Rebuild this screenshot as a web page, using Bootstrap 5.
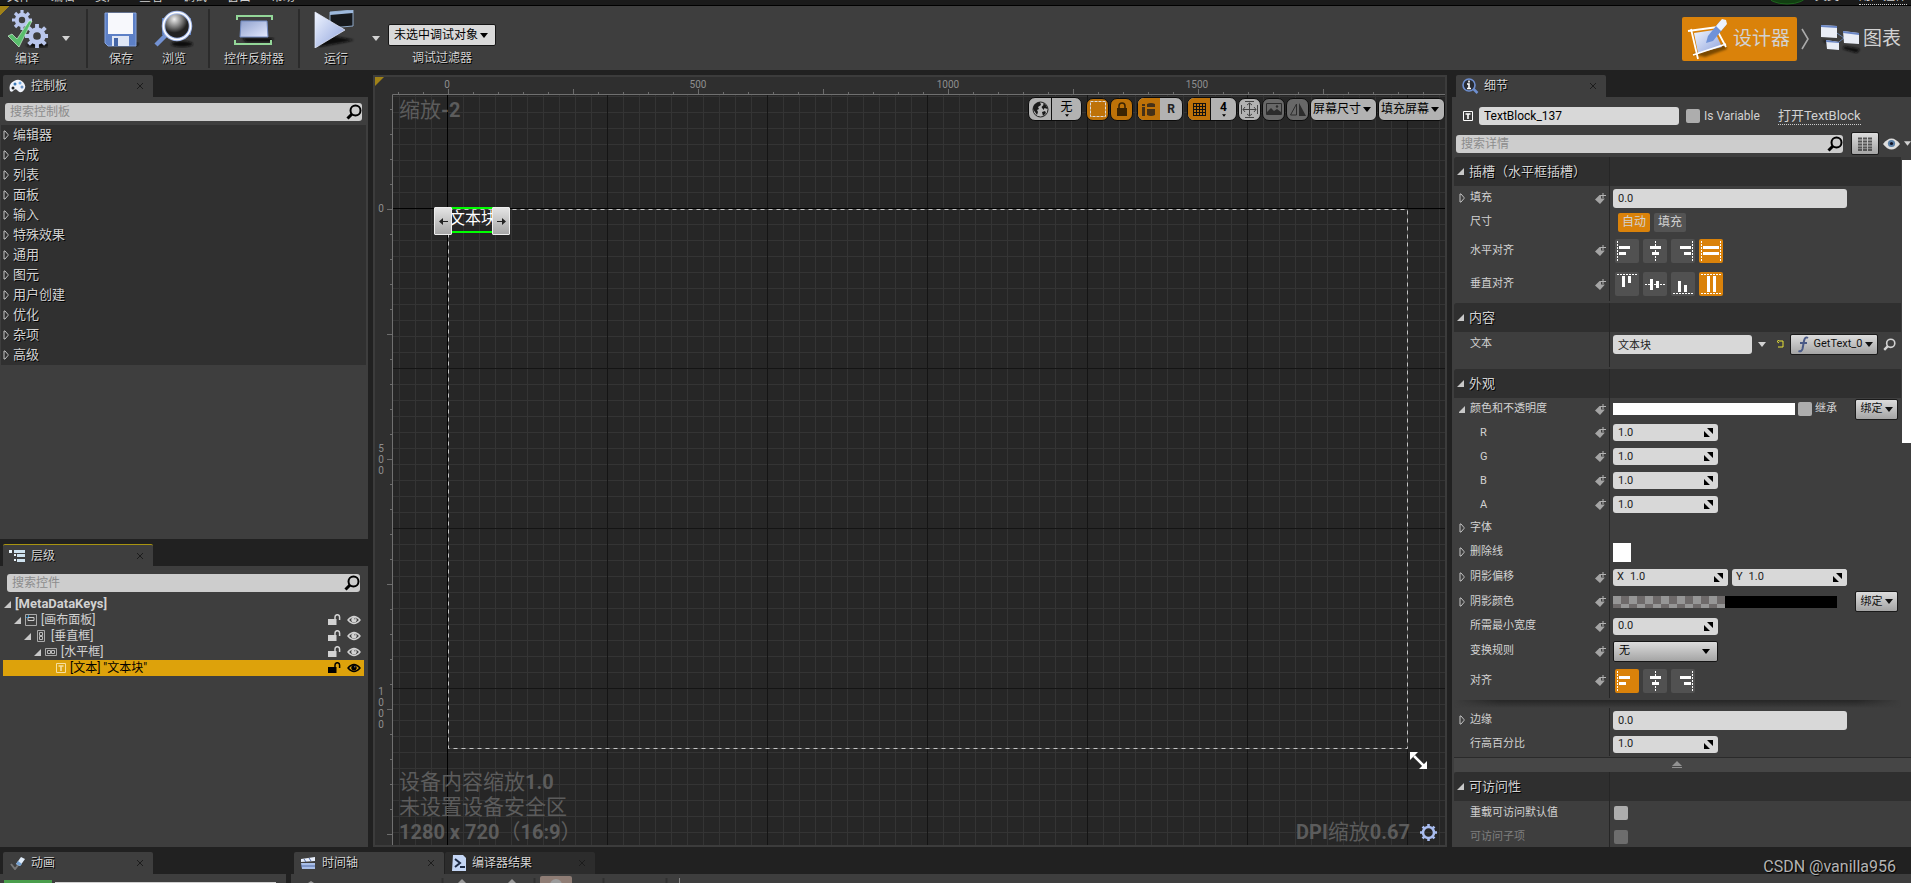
<!DOCTYPE html>
<html lang="zh-CN">
<head>
<meta charset="utf-8">
<meta name="viewport" content="width=device-width, initial-scale=1">
<title>控件蓝图编辑器</title>
<link href="https://cdn.jsdelivr.net/npm/bootstrap@5.3.0/dist/css/bootstrap.min.css" rel="stylesheet">
<script src="https://cdn.jsdelivr.net/npm/bootstrap@5.3.0/dist/js/bootstrap.bundle.min.js"></script>
<style>
:root{--chrome:#212121;--panel:#3e3e3e;--list:#303030;--field:#d8d8d8;--hot:#da820a;--ink:#d2d2d2}
body{font-family:Roboto,"Noto Sans CJK SC",sans-serif;font-size:12px;line-height:16px;color:var(--ink);background:var(--chrome)}
button,input,select{font-family:inherit;color:inherit}
input,select{min-width:0}
svg{display:block;flex:none}
a{color:inherit;text-decoration:none}
.sh{text-shadow:1px 1px 0 #000}
.menu-strip{height:6px;background:#1a1a1a;border-bottom:1px solid #000}
.menu-strip nav{gap:20px;padding-left:7px}
.dotted{border-bottom:1px dotted #ccc}
.tool-strip{height:64px;background:var(--panel);gap:14px;padding:0 10px 0 6px}
.tool-strip .vr{width:2px;height:59px;background:#2b2b2b;opacity:1;margin-top:3px}
.tool-btn{background:none;border:0;padding:4px 0 0;display:flex;flex-direction:column;align-items:center;color:var(--ink)}
.tool-btn span{line-height:20px;margin-top:1px}
.corner{width:9px;height:9px;top:0;left:0;background:linear-gradient(135deg,#a08218 50%,transparent 50%)}
.caret-btn{background:none;border:0;padding:0;width:10px}
.debug-pick{margin-left:-8px;padding-top:18px}
.debug-pick .combo{width:108px;height:22px}
.combo{appearance:none;border:1px solid #151515;border-radius:2px;color:#000;padding:0 0 0 5px;
 background:#d9d9d9 url("data:image/svg+xml,%3Csvg xmlns='http://www.w3.org/2000/svg' width='8' height='5'%3E%3Cpath d='M0 0h8L4 5z'/%3E%3C/svg%3E") no-repeat right 7px center}
.combo-grad{width:105px;height:21px;background-image:url("data:image/svg+xml,%3Csvg xmlns='http://www.w3.org/2000/svg' width='8' height='5'%3E%3Cpath d='M0 0h8L4 5z'/%3E%3C/svg%3E"),linear-gradient(#dcdcdc,#a4a4a4);background-position:right 7px center,0 0;background-repeat:no-repeat}
.modes{height:66px}
.mode-btn{height:44px;border:0;border-radius:2px;background:none;font-size:19px;line-height:24px;padding:0;display:flex;align-items:center}
.mode-btn.active{background:var(--hot);padding:0 7px 0 5px}
.side-left{width:368px}
.side-right{width:459px}
.dock-tab{width:150px;height:22px;margin-left:3px;background:var(--panel);border-radius:2px 2px 0 0;padding:0 9px 0 6px}
.dock-tab.focused{border-top:1px solid #a89410}
.dock-tab.idle{background:#2c2c2c;margin-left:1px}
.dock-tab .x{background:none;border:0;padding:0;color:#222}
.dock-tab .sh{margin-left:5px}
.dock-body{background:var(--panel)}
.search{height:18px;background:#cdcdcd;border-radius:3px;color:#000}
.search input{background:none;border:0;outline:0;flex:1;padding:0 5px;height:18px}
.search input::placeholder{color:#8c8c8c;opacity:1}
.in-palette{margin:6px 6px 0 5px}
.in-tree{margin:8px 8px 4px 7px}
.palette-list{background:var(--list);margin:4px 2px 0 1px}
.palette-list a{height:20px;font-size:13px;padding-left:2px;gap:4px}
.tree-row{height:16px;padding-right:3px;margin:0 4px 0 3px;gap:4px}
.tree-row.picked{background:#dda20b;color:#000}
.tree-row .lock{margin-left:auto;margin-right:2px}
.lv0{padding-left:1px;font-size:13px}.lv1{padding-left:11px}.lv2{padding-left:21px}.lv3{padding-left:31px}.lv4{padding-left:53px}
.stage{border:2px solid #3c3c3c;background:#262626;min-height:0}
.stage-text{font-size:21px;line-height:25px;color:#5c5c5c;left:24px}
.stage-text b{font-size:20px}
.stage-zoom{top:21px}
.stage-dpi{left:auto;right:8px;gap:10px}
.view-tools{top:20px;right:0;gap:1px}
.pill{height:24px;border:1px solid #0c0c0c;border-radius:7px;background:#b2b2b2;color:#222;padding:0;overflow:hidden;display:flex;align-items:center;justify-content:center}
.pill.small-pill{height:23px;width:23px}
.pill.on,.pill .on{background:#be7208}
.pill.off{background:#686868}
.pill.last{margin-right:3px}
.pill button{border:0;padding:0;background:none;height:22px;width:22px;display:flex;flex-direction:column;align-items:center;justify-content:center;line-height:13px}
.pill .drop{width:30px;border-left:1px solid #111;color:#000}
.pill .drop.narrow{width:26px}
.pill-combo{border-radius:6px;height:23px;width:67px;background-color:#b2b2b2;border-color:#0c0c0c;background-position:right 5px center;padding-left:2px}
.shift{width:18px;height:28px;border:1px solid #eee;border-radius:1px;background:linear-gradient(#e4e4e4,#a6a6a6);padding:0;display:flex;align-items:center;justify-content:center}
.widget-sel{left:59px;top:130px;width:76px;height:28px}
.widget-text{border-top:2px solid #0f0;border-bottom:2px solid #0f0;height:26px;width:52px;margin-left:-5px;margin-right:-7px;font-size:16px;line-height:20px;color:#fff;padding-left:2px;white-space:nowrap;overflow:hidden}
.field{background:var(--field);border:0;border-radius:3px;color:#222;font-size:11px;height:19px;padding:0 5px;line-height:18px}
.field.num{height:17px;width:105px;background-image:url("data:image/svg+xml,%3Csvg xmlns='http://www.w3.org/2000/svg' width='9' height='9'%3E%3Cpath d='M3 0h6v6zM0 3v6h6z'/%3E%3C/svg%3E");background-repeat:no-repeat;background-position:right 5px center}
.field.wide{width:234px}
.field.mid{width:139px}
.field.title{width:200px;height:18px;margin:0 7px 0 6px;font-size:12px;color:#000}
.name-bar{padding:10px 0 0 11px;height:28px}
.name-bar a{margin-left:18px;font-size:13px;line-height:17px}
.find-bar{padding:6px 0 0 4px;height:32px}
.find-bar .grad-btn{width:28px;height:23px}
.axis{background:var(--field);border-radius:3px;height:17px;width:115px;color:#222;font-size:11px}
.axis .num{flex:1;width:auto;padding-left:6px}
.tick{appearance:none;width:14px;height:14px;border-radius:2px;background:#adadad;margin:0;display:block}
.tick:disabled{background:#6d6d6d}
.tick.mid-row{margin:0 3px}
.grad-btn{border:1px solid #1a1a1a;border-radius:2px;background:linear-gradient(#dcdcdc,#a4a4a4);color:#111;font-size:11px;padding:0;height:21px;display:flex;align-items:center;justify-content:center;gap:2px}
.grad-btn.bind{width:43px;margin:0 3px 0 auto}
.grad-btn.func{width:88px;margin:0 5px 0 6px}
.more{margin:0 10px 0 6px}
.props{margin-right:10px}
.sect{height:29px;background:#2f2f2f;border-radius:3px 0 0 0;font-size:13px;margin-left:2px}
.sect.later{margin-top:2px}
.sect h2{font-size:13px;line-height:29px;font-weight:400;margin:0;padding-left:3px;gap:5px}
.name-col{width:156px;border-right:1px solid #262626;align-self:stretch}
.prop{font-size:11px;margin-left:2px}
.prop .name-col{padding:0 3px 0 16px}
.prop .name-col.open{padding-left:5px}
.prop .name-col.open svg:first-child{margin-right:5px}
.prop .val{padding-left:3px;flex:1}
.prop .chan{padding-left:10px}
.prop .opts{padding-left:5px}
.h23{height:23px}.h24{height:24px}.h25{height:25px}.h33{height:33px}.h34{height:34px}.h35{height:35px}
.text-opt{width:32px;height:19px;border:0;border-radius:2px;background:#535353;padding:0;font-size:12px;line-height:18px}
.ico-opt{width:24px;height:24px;border:0;border-radius:2px;background:#515151;padding:0;color:#fff}
.text-opt.active,.ico-opt.active{background:var(--hot)}
.shadow-line{height:8px;margin:2px 0 0 2px;background:linear-gradient(#262626,transparent);-webkit-mask:linear-gradient(90deg,transparent,#000 10%,#000 90%,transparent)}
.fold{height:14px;margin:2px 0 0 2px;padding:0 14px 0 0;background:#464646;box-shadow:0 -1px 0 #2a2a2a}
.checker{width:112px;height:12px;background:repeating-conic-gradient(#6e6a6a 0 25%,#969696 0 50%) 0 0/16px 16px}
.swatch{border:0;padding:0;background:#fff;height:12px}
.swatch.tint{width:182px}.swatch.shade{width:224px}.swatch.brush{width:18px;height:19px}
.dim{color:#7e7e7e}
.props-scroll{top:63px;right:0;width:9px;height:283px;background:#fff}
.bottom-strip{height:31px;gap:5px}
.anim{width:286px}
.mark-text{right:15px;bottom:5px;font-size:16px;line-height:22px;color:#b4b4b4;text-shadow:1px 1px 1px #000}
.add-bar{width:48px;height:3px;background:#4a9e4c}
.find-edge{width:221px;height:1px;background:#d0d0d0;margin-left:3px}
</style>
</head>
<body class="vh-100 overflow-hidden d-flex flex-column">

<svg width="0" height="0" class="position-absolute" aria-hidden="true">
 <defs>
  <symbol id="mag" viewBox="0 0 16 16"><circle cx="9.500" cy="6.500" r="5" fill="none" stroke="currentColor" stroke-width="2"/><path d="M6 10 1.500 14.500" stroke="currentColor" stroke-width="3"/></symbol>
  <symbol id="closed" viewBox="0 0 6 10"><path d="M1 1v8h1l3-3.500v-1L2 1z" fill="none" stroke="#c4c4c4"/></symbol>
  <symbol id="opened" viewBox="0 0 8 8"><path d="M8 0v8H0z" fill="#c8c8c8"/></symbol>
  <symbol id="down" viewBox="0 0 8 5"><path d="M0 0h8L4 5z" fill="currentColor"/></symbol>
  <symbol id="cross" viewBox="0 0 8 8"><path d="m1 1 6 6M7 1 1 7" stroke="#1c1c1c"/></symbol>
  <symbol id="lock-open" viewBox="0 0 13 12"><path d="M0 5h8.500v6H0z" fill="currentColor"/><path d="M7 5V3a2.300 2.300 0 0 1 4.600 0v3" fill="none" stroke="currentColor" stroke-width="1.500"/></symbol>
  <symbol id="eye" viewBox="0 0 14 10"><path d="M1 5q6-7 12 0-6 7-12 0z" fill="none" stroke="currentColor" stroke-width="1.400"/><circle cx="7" cy="4.800" r="2.700" fill="currentColor"/><circle cx="7.800" cy="3.800" r=".8" fill="#777"/></symbol>
  <symbol id="key" viewBox="0 0 11 11"><path d="M0 6.500 4.500 2H6v3.500h3.500V6L5 11z" fill="#a4a4a4"/><path d="M8 0v5M5.500 2.500h5.500" stroke="#b4b4b4"/></symbol>
  <symbol id="tbox" viewBox="0 0 10 10"><path d="M.5.5h9v9h-9z" fill="none" stroke="currentColor"/><path d="M2.500 3h5M5 3v5" stroke="currentColor" stroke-width="1.600"/></symbol>
  <symbol id="h-l" viewBox="0 0 24 24"><path d="M2.500 2v20" stroke="#fff" stroke-dasharray="2 1"/><path d="M4 7h11v3H4zM4 13h7v3H4z" fill="#fff"/></symbol>
  <symbol id="h-c" viewBox="0 0 24 24"><path d="M12.500 2v20" stroke="#fff" stroke-dasharray="2 1"/><path d="M7 7h11v3H7zM9 13h7v3H9z" fill="#fff"/></symbol>
  <symbol id="h-r" viewBox="0 0 24 24"><path d="M21.500 2v20" stroke="#fff" stroke-dasharray="2 1"/><path d="M9 7h11v3H9zM13 13h7v3h-7z" fill="#fff"/></symbol>
  <symbol id="h-f" viewBox="0 0 24 24"><path d="M2.500 2v20M21.500 2v20" stroke="#fff" stroke-dasharray="2 1"/><path d="M4 7h16v3H4zM4 13h16v3H4z" fill="#fff"/></symbol>
  <symbol id="v-t" viewBox="0 0 24 24"><path d="M2 2.500h20" stroke="#fff" stroke-dasharray="2 1"/><path d="M7 4h3v11H7zM13 4h3v7h-3z" fill="#fff"/></symbol>
  <symbol id="v-c" viewBox="0 0 24 24"><path d="M2 12.500h20" stroke="#fff" stroke-dasharray="2 1"/><path d="M7 7h3v11H7zM13 9h3v7h-3z" fill="#fff"/></symbol>
  <symbol id="v-b" viewBox="0 0 24 24"><path d="M2 21.500h20" stroke="#fff" stroke-dasharray="2 1"/><path d="M7 9h3v11H7zM13 13h3v7h-3z" fill="#fff"/></symbol>
  <symbol id="v-f" viewBox="0 0 24 24"><path d="M2 2.500h20M2 21.500h20" stroke="#fff" stroke-dasharray="2 1"/><path d="M8 4h3v16H8zM14 4h3v16h-3z" fill="#fff"/></symbol>
  <symbol id="gear" viewBox="-10 -10 20 20"><circle r="5.200" fill="none" stroke="currentColor" stroke-width="4"/><path d="M0-10V-6M0 6v4M-10 0h4M6 0h4M-7-7l3 3M4 4l3 3M7-7 4-4M-4 4l-3 3" stroke="currentColor" stroke-width="3.200"/></symbol>
  <linearGradient id="blue" x2="1" y2="1"><stop stop-color="#f0f5ff"/><stop offset="1" stop-color="#8ea2dc"/></linearGradient>
  <linearGradient id="pale" x2="1" y2="1"><stop stop-color="#8fa0cc"/><stop offset="1" stop-color="#e4eaff"/></linearGradient>
  <radialGradient id="glass" cx=".4" cy=".25"><stop stop-color="#eee"/><stop offset=".6" stop-color="#777"/><stop offset="1" stop-color="#222"/></radialGradient>
  <filter id="soft"><feGaussianBlur stdDeviation="1"/></filter>
 </defs>
</svg>

<header class="flex-shrink-0">
 <div class="menu-strip d-flex align-items-end justify-content-between overflow-hidden">
  <nav class="d-flex" aria-label="菜单">
   <a href="#">文件</a><a href="#">编辑</a><a href="#">资产</a><a href="#">查看</a><a href="#">调试</a><a href="#">窗口</a><a href="#">帮助</a>
  </nav>
  <div class="d-flex"><svg width="40" height="7" class="me-1 align-self-end"><ellipse cx="16" cy="-3" rx="20" ry="9" fill="#123f12" stroke="#1d641d"/></svg><span class="me-2">父类：</span><a href="#" class="dotted me-1">用户控件</a></div>
 </div>
 <div class="tool-strip d-flex align-items-start position-relative">
  <div class="corner position-absolute"></div>
  <button class="tool-btn"><svg width="42" height="38" viewBox="0 0 42 38">
    <ellipse cx="32" cy="35" rx="12" ry="2.500" fill="#111" filter="url(#soft)"/>
    <g color="#b9c6ec"><use href="#gear" x="6" y="0" width="20" height="20"/><use href="#gear" x="19" y="14" width="24" height="24"/></g>
    <path d="m2 26 4-2 5 5L23 11l3 0L13 37z" fill="#59bd6c" stroke="#e1ffe6" stroke-width=".6"/></svg><span class="sh">编译</span></button>
  <button class="caret-btn align-self-center" aria-label="编译选项"><svg width="8" height="5"><use href="#down"/></svg></button>
  <div class="vr"></div>
  <button class="tool-btn"><svg width="38" height="38" viewBox="0 0 38 38">
    <path d="M6 33h31l-2 3H10z" fill="#111" filter="url(#soft)"/><path d="M3 3h31v33H6l-3-3z" fill="#5d80c6" stroke="#86a3dd"/><path d="M6 3h25v21H6z" fill="#f7f8fc"/><path d="M10 26h17v10H10z" fill="#dfe6f5"/><path d="M12 28h4v8h-4z" fill="#4465a6"/></svg><span class="sh">保存</span></button>
  <button class="tool-btn"><svg width="40" height="38" viewBox="0 0 40 38">
    <ellipse cx="28" cy="34" rx="11" ry="3" fill="#111" filter="url(#soft)"/><path d="M8 8h29v17H8z" fill="#5878b5"/><path d="M12 25 2 35" stroke="#7392d2" stroke-width="4.500"/><circle cx="23" cy="16" r="13.500" fill="url(#glass)" stroke="#a3b8e8" stroke-width="3.500"/><circle cx="23" cy="16" r="13.500" fill="none" stroke="#fff" stroke-width="1.500"/></svg><span class="sh">浏览</span></button>
  <div class="vr"></div>
  <button class="tool-btn"><svg width="60" height="38" viewBox="0 0 60 38">
    <path d="M18 28h32l-3 4H22z" fill="#0a0a0a" filter="url(#soft)"/><path d="M17 11h26l1 16H16z" fill="url(#pale)" stroke="#738bc2"/><path d="M13 10V6h35v4M11 30v4h36v-4" fill="none" stroke="#93d698" stroke-width="2"/></svg><span class="sh">控件反射器</span></button>
  <div class="vr"></div>
  <button class="tool-btn"><svg width="44" height="38" viewBox="2 1 44 38">
    <path d="M16 26 42 31l-8 2-28 5z" fill="#0c0c0c" filter="url(#soft)"/><path d="m18 3 23-2v16l-23 2z" fill="#16191d" stroke="#8fa9c8"/><path d="m18 3 23-2v3L18 6z" fill="#9db9dd"/><path d="M3 3 33 21 3 39z" fill="url(#blue)" stroke="#e8eeff" stroke-width=".7"/></svg><span class="sh">运行</span></button>
  <button class="caret-btn align-self-center" aria-label="运行选项"><svg width="8" height="5"><use href="#down"/></svg></button>
  <div class="debug-pick text-center">
   <select id="dbg" class="combo d-block"><option>未选中调试对象</option></select>
   <label for="dbg" class="sh d-block mt-1">调试过滤器</label>
  </div>
  <div class="modes ms-auto d-flex align-items-center">
   <button class="mode-btn active gap-1"><svg width="42" height="42" viewBox="0 0 42 42">
     <path d="M5 36 38 26l2 5-22 8z" fill="#7a4a05" filter="url(#soft)"/><path d="m7 15 20-3 8 17-24 6z" fill="url(#blue)"/><path d="m1 13 30-4M4 11l7 30M6 37l33-11M30 12l9 17" stroke="#fff" stroke-width="1.800" fill="none"/><path d="M19 25l2-7L33 3l6 4-13 16z" fill="#6f92d8"/><path d="m29 8 6-7 4 1 1 4-6 7z" fill="#edf3ff"/></svg>设计器</button>
   <svg width="10" height="24" viewBox="0 0 10 24" class="mx-1"><path d="m1 2 6 10-6 10" fill="none" stroke="#aaa" stroke-width="1.600"/></svg>
   <button class="mode-btn ms-1"><svg width="44" height="30" viewBox="1 0 44 30">
     <path d="M26 22l16 3-3 4-14-4zM4 16l12 3v6z" fill="#111" filter="url(#soft)"/><path d="M16 7 26 14 17 21" stroke="#5f7cab" fill="none"/><path d="m3 1 16 1v12l-16-1zM25 7l16 2v11l-15-1zM8 16l13 2v8L9 25z" fill="#e9edf6"/><path d="m3 1 16 1v2L3 3zM25 7l16 2v2L25 9zM8 16l13 2v1L8 18z" fill="#6a86c5"/></svg>图表</button>
  </div>
 </div>
</header>

<main class="d-flex flex-fill overflow-hidden" style="gap:5px;padding:5px 0">
 <!-- left column: palette and hierarchy -->
 <div class="side-left d-flex flex-column flex-shrink-0" style="gap:5px">
  <section class="d-flex flex-column" style="flex:464 1 0">
   <div class="dock-tab d-flex align-items-center"><svg width="17" height="14" viewBox="0 0 17 14"><path d="M1 12Q-1 5 5 2q5-3 9 1 4 4 1 8-3 4-6 1-2-3-4-1-2 3-4 1z" fill="#f0f3fa"/><circle cx="6" cy="5" r="1.500" fill="#3b78b8"/><circle cx="11" cy="4" r="1.500" fill="#77aee6"/><circle cx="4" cy="9" r="1.500" fill="#222"/><circle cx="13" cy="8" r="1.500" fill="#6893c8"/></svg><span class="sh">控制板</span><button class="x ms-auto" aria-label="关闭"><svg width="8" height="8"><use href="#cross"/></svg></button></div>
   <div class="dock-body flex-fill d-flex flex-column">
    <div class="search in-palette d-flex align-items-center"><input type="search" placeholder="搜索控制板" aria-label="搜索控制板"><svg width="16" height="16"><use href="#mag"/></svg></div>
    <div class="palette-list sh">
     <a href="#" class="d-flex align-items-center"><svg width="6" height="10"><use href="#closed"/></svg>编辑器</a>
     <a href="#" class="d-flex align-items-center"><svg width="6" height="10"><use href="#closed"/></svg>合成</a>
     <a href="#" class="d-flex align-items-center"><svg width="6" height="10"><use href="#closed"/></svg>列表</a>
     <a href="#" class="d-flex align-items-center"><svg width="6" height="10"><use href="#closed"/></svg>面板</a>
     <a href="#" class="d-flex align-items-center"><svg width="6" height="10"><use href="#closed"/></svg>输入</a>
     <a href="#" class="d-flex align-items-center"><svg width="6" height="10"><use href="#closed"/></svg>特殊效果</a>
     <a href="#" class="d-flex align-items-center"><svg width="6" height="10"><use href="#closed"/></svg>通用</a>
     <a href="#" class="d-flex align-items-center"><svg width="6" height="10"><use href="#closed"/></svg>图元</a>
     <a href="#" class="d-flex align-items-center"><svg width="6" height="10"><use href="#closed"/></svg>用户创建</a>
     <a href="#" class="d-flex align-items-center"><svg width="6" height="10"><use href="#closed"/></svg>优化</a>
     <a href="#" class="d-flex align-items-center"><svg width="6" height="10"><use href="#closed"/></svg>杂项</a>
     <a href="#" class="d-flex align-items-center"><svg width="6" height="10"><use href="#closed"/></svg>高级</a>
    </div>
   </div>
  </section>
  <section class="d-flex flex-column" style="flex:303 1 0">
   <div class="dock-tab focused d-flex align-items-center"><svg width="17" height="14" viewBox="0 0 17 14"><path d="M0 1h3v3H0zM5 5h2v2H5zM5 10h2v2H5z" fill="#e9f2f8"/><path d="M5 1h11v3H5zM8 5h8v3H8zM8 10h8v3H8z" fill="#cfe2ee"/></svg><span class="sh">层级</span><button class="x ms-auto" aria-label="关闭"><svg width="8" height="8"><use href="#cross"/></svg></button></div>
   <div class="dock-body flex-fill d-flex flex-column">
    <div class="search in-tree d-flex align-items-center"><input type="search" placeholder="搜索控件" aria-label="搜索控件"><svg width="16" height="16"><use href="#mag"/></svg></div>
    <div class="tree-row lv0 d-flex align-items-center"><svg width="7" height="7"><use href="#opened"/></svg><b>[MetaDataKeys]</b></div>
    <div class="tree-row lv1 d-flex align-items-center"><svg width="7" height="7"><use href="#opened"/></svg><svg width="12" height="12"><path d="M.5.5h11v11H.5z" fill="none" stroke="#aaa"/><path d="M3 3.500h6v3H3z" fill="none" stroke="#ccc"/><path d="M1 3.500h2M3.500 1v2" stroke="#2d8ccc"/></svg><span>[画布面板]</span><svg class="lock" width="13" height="12"><use href="#lock-open"/></svg><svg width="14" height="10"><use href="#eye"/></svg></div>
    <div class="tree-row lv2 d-flex align-items-center"><svg width="7" height="7"><use href="#opened"/></svg><svg width="12" height="12"><path d="M2.500.5h7v11h-7z" fill="none" stroke="#aaa"/><path d="M4.500 2.500h3v3h-3zM4.500 6.500h3v3h-3z" fill="none" stroke="#bbb"/></svg><span>[垂直框]</span><svg class="lock" width="13" height="12"><use href="#lock-open"/></svg><svg width="14" height="10"><use href="#eye"/></svg></div>
    <div class="tree-row lv3 d-flex align-items-center"><svg width="7" height="7"><use href="#opened"/></svg><svg width="12" height="12"><path d="M.5 2.500h11v7H.5z" fill="none" stroke="#aaa"/><path d="M2.500 4.500h3v3h-3zM6.500 4.500h3v3h-3z" fill="none" stroke="#bbb"/></svg><span>[水平框]</span><svg class="lock" width="13" height="12"><use href="#lock-open"/></svg><svg width="14" height="10"><use href="#eye"/></svg></div>
    <div class="tree-row lv4 picked d-flex align-items-center"><svg width="10" height="10" color="#f6dfa0"><use href="#tbox"/></svg><span>[文本] "文本块"</span><svg class="lock" width="13" height="12"><use href="#lock-open"/></svg><svg width="14" height="10"><use href="#eye"/></svg></div>
   </div>
  </section>
 </div>

 <!-- designer viewport: rulers and canvas -->
 <section class="stage position-relative flex-fill overflow-hidden">
  <svg width="100%" height="100%" class="position-absolute top-0 start-0" font-size="10" fill="#8e8e8e" text-anchor="middle">
   <defs>
    <pattern id="minor" x="24" y="19" width="16" height="16" patternUnits="userSpaceOnUse"><path d="M.5 0v16M0 .5h16" stroke="#343434"/></pattern>
    <pattern id="major" x="72" y="131" width="160" height="160" patternUnits="userSpaceOnUse"><path d="M.5 0v160M0 .5h160" stroke="#141414"/></pattern>
    <pattern id="rx" x="73" y="0" width="125" height="20" patternUnits="userSpaceOnUse"><path d="M.5 12v6M25.500 15v3M50.500 15v3M75.500 15v3M100.500 15v3" stroke="#6c6c6c"/></pattern>
    <pattern id="ry" x="0" y="132" width="20" height="125" patternUnits="userSpaceOnUse"><path d="M12 .5h6M15 25.500h3M15 50.500h3M15 75.500h3M15 100.500h3" stroke="#6c6c6c"/></pattern>
   </defs>
   <rect x="18" y="18" width="100%" height="100%" fill="url(#minor)"/>
   <rect x="18" y="18" width="100%" height="100%" fill="url(#major)"/>
   <path d="M72.500 18v900M18 131.500h2500" stroke="#000"/>
   <path d="M0 0h4000v17H17v2000H0z" fill="#2f2f2f"/>
   <rect x="18" width="100%" height="18" fill="url(#rx)"/><rect y="18" width="18" height="100%" fill="url(#ry)"/>
   <path d="M4000 17.500H17.500V2000" fill="none" stroke="#707070"/>
   <text x="72" y="11">0</text><text x="323" y="11">500</text><text x="573" y="11">1000</text><text x="822" y="11">1500</text>
   <text x="6" y="135">0</text>
   <text x="6" y="375">5</text><text x="6" y="386">0</text><text x="6" y="397">0</text>
   <text x="6" y="618">1</text><text x="6" y="629">0</text><text x="6" y="640">0</text><text x="6" y="651">0</text>
   <path d="M0 0h9L0 9z" fill="#a08218"/>
   <rect x="73.500" y="132.500" width="959" height="539" fill="none" stroke="#3f3f3f"/>
   <rect x="73.500" y="132.500" width="959" height="539" fill="none" stroke="#c4c4c4" stroke-dasharray="4 4"/>
   <g stroke="#fff" stroke-width="2.500" fill="#fff"><path d="m1039 679 10 10"/><path stroke="none" d="M1035 675h8l-8 8zM1052 692h-8l8-8z"/></g>
  </svg>
  <div class="stage-text stage-zoom position-absolute">缩放<b>-2</b></div>
  <div class="stage-text position-absolute bottom-0">设备内容缩放<b>1.0</b><br>未设置设备安全区<br><b>1280 x 720</b>（<b>16:9</b>）</div>
  <div class="stage-text stage-dpi position-absolute bottom-0 d-flex align-items-center"><span><b>DPI</b>缩放<b>0.67</b></span><button class="border-0 bg-transparent p-0" aria-label="设置"><svg width="17" height="17" color="#a9bdf0" viewBox="-10 -10 20 20"><circle r="6.500" fill="none" stroke="currentColor" stroke-width="3"/><path d="M0-10V-7M0 7v3M-10 0h3M7 0h3M-7-7l2 2M5 5l2 2M7-7 5-5M-5 5l-2 2" stroke="currentColor" stroke-width="3"/></svg></button></div>
  <div class="widget-sel position-absolute d-flex">
   <button class="shift position-relative z-1" aria-label="左移"><svg width="9" height="7"><path d="M4 0v3h5v1H4v3L0 3.500z" fill="#222"/></svg></button>
   <div class="widget-text">文本块</div>
   <button class="shift position-relative z-1" aria-label="右移"><svg width="9" height="7"><path d="M5 0v3H0v1h5v3l4-3.500z" fill="#222"/></svg></button>
  </div>
  <div class="view-tools position-absolute d-flex align-items-center">
   <div class="pill last"><button aria-label="本地化"><svg width="17" height="17" viewBox="0 0 17 17"><circle cx="8.500" cy="8.500" r="7.500" fill="#b9b9b9" stroke="#222"/><path d="M2 4q3-3 6-3l1 3-3 2 1 2-2 1 1 2-1 3-2-3-2-3zM11 2q4 2 4.500 6l-3-1-1 2-2-3 2-2zM10 11l3-1 1 2-3 3z" fill="#1a1a1a"/></svg></button><button class="drop"><span>无</span><svg width="4" height="3"><use href="#down"/></svg></button></div>
   <button class="pill small-pill on" aria-label="虚线轮廓"><svg width="16" height="16"><path d="M.5.5h15v15H.5z" fill="none" stroke="#ddd" stroke-dasharray="3 1"/></svg></button>
   <button class="pill small-pill on last" aria-label="遵守锁定"><svg width="12" height="14"><path d="M1 6h10v8H1z" fill="#3b2403"/><path d="M3 7V4a3 3 0 0 1 6 0v3" fill="none" stroke="#3b2403" stroke-width="1.600"/></svg></button>
   <div class="pill last"><button class="on" aria-label="布局变换"><svg width="14" height="13"><path d="M0 1h3v2H0zM0 4h3v9H0zM5 1q4-2 8 0v3H5zM5 6h8v6q-4 2-8 0z" fill="#453118"/></svg></button><button><b>R</b></button></div>
   <div class="pill"><button class="on" aria-label="网格吸附"><svg width="13" height="13"><path d="M.5 0v13M3.500 0v13M6.500 0v13M9.500 0v13M12.500 0v13M0 .5h13M0 3.500h13M0 6.500h13M0 9.500h13M0 12.500h13" stroke="#111"/></svg></button><button class="drop narrow"><b>4</b><svg width="4" height="3"><use href="#down"/></svg></button></div>
   <button class="pill small-pill" aria-label="缩放至合适大小"><svg width="17" height="17"><path d="M4 .5h9M4 16.500h9M.5 4v9M16.500 4v9M2 8.500h13M8.500 2v13M4 6 2 8.500 4 11M13 6l2 2.500-2 2.500M6 4l2.500-2L11 4M6 13l2.500 2 2.500-2" fill="none" stroke="#444"/></svg></button>
   <button class="pill small-pill off" aria-label="背景图"><svg width="16" height="12"><path d="M.5.5h15v11H.5z" fill="none" stroke="#2c2c2c"/><path d="M1 11V9l4-4 3 3 3-2 4 3v2z" fill="#2c2c2c"/><circle cx="11" cy="3.500" r="1.200" fill="#2c2c2c"/></svg></button>
   <button class="pill small-pill off" aria-label="翻转"><svg width="16" height="13"><path d="M6.500 1v11h-6z" fill="none" stroke="#2c2c2c"/><path d="M9 0v13h7z" fill="#2c2c2c"/></svg></button>
   <select class="combo pill-combo" aria-label="屏幕尺寸"><option>屏幕尺寸</option></select>
   <select class="combo pill-combo" aria-label="填充屏幕"><option>填充屏幕</option></select>
  </div>
 </section>

 <!-- details panel -->
 <section class="side-right d-flex flex-column flex-shrink-0">
  <div class="dock-tab d-flex align-items-center ms-1"><svg width="17" height="16" viewBox="0 0 17 16"><circle cx="7" cy="7" r="6" fill="#272b33" stroke="#6e8fd0" stroke-width="1.600"/><path d="m11.500 11 4 4" stroke="#6e8fd0" stroke-width="2.500"/><path d="M7 2.500v2M5 6h2v4M5 10.500h4" stroke="#fff" stroke-width="1.600" fill="none"/></svg><span class="sh">细节</span><button class="x ms-auto" aria-label="关闭"><svg width="8" height="8"><use href="#cross"/></svg></button></div>
  <div class="dock-body flex-fill position-relative overflow-hidden">
   <div class="name-bar d-flex align-items-center"><svg width="10" height="10" color="#fff"><use href="#tbox"/></svg>
    <input class="field title" value="TextBlock_137" aria-label="名称">
    <input class="tick" type="checkbox" id="isvar"><label for="isvar" class="ms-1">Is Variable</label>
    <a href="#" class="dotted">打开TextBlock</a></div>
   <div class="find-bar d-flex align-items-center"><div class="search d-flex align-items-center flex-fill"><input type="search" placeholder="搜索详情" aria-label="搜索详情"><svg width="16" height="16"><use href="#mag"/></svg></div>
    <button class="grad-btn ms-2" aria-label="属性矩阵"><svg width="14" height="14"><path d="M0 1.500h14M0 4.500h14M0 7.500h14M0 10.500h14M0 13h14" stroke="#555" stroke-width="2" stroke-dasharray="4 1"/></svg></button>
    <button class="border-0 bg-transparent p-0 ms-1 gap-1 d-flex align-items-center" aria-label="视图选项"><svg width="17" height="12" viewBox="0 0 17 12"><path d="M0 6q8.500-11 17 0-8.500 11-17 0z" fill="#dedede"/><circle cx="8.500" cy="5.500" r="3.600" fill="#5a7fa6"/><circle cx="8.500" cy="5.500" r="1.600" fill="#112"/></svg><svg width="7" height="5"><use href="#down"/></svg></button></div>

   <div class="props">
   <div class="sect d-flex"><h2 class="name-col d-flex align-items-center sh"><svg width="7" height="7"><use href="#opened"/></svg>插槽（水平框插槽）</h2></div>
   <div class="prop d-flex align-items-center h25"><label for="pad" class="name-col open d-flex align-items-center"><svg width="6" height="10"><use href="#closed"/></svg>填充<svg class="ms-auto" width="11" height="11"><use href="#key"/></svg></label><div class="val"><input id="pad" class="field wide d-block" value="0.0"></div></div>
   <div class="prop d-flex align-items-center h23"><div class="name-col d-flex align-items-center">尺寸</div><div class="val d-flex gap-1 ps-2"><button class="text-opt active">自动</button><button class="text-opt">填充</button></div></div>
   <div class="prop d-flex align-items-center h34"><div class="name-col d-flex align-items-center">水平对齐<svg class="ms-auto" width="11" height="11"><use href="#key"/></svg></div><div class="val opts d-flex gap-1"><button class="ico-opt" aria-label="左对齐"><svg width="24" height="24"><use href="#h-l"/></svg></button><button class="ico-opt" aria-label="居中"><svg width="24" height="24"><use href="#h-c"/></svg></button><button class="ico-opt" aria-label="右对齐"><svg width="24" height="24"><use href="#h-r"/></svg></button><button class="ico-opt active" aria-label="水平填充"><svg width="24" height="24"><use href="#h-f"/></svg></button></div></div>
   <div class="prop d-flex align-items-center h33"><div class="name-col d-flex align-items-center">垂直对齐<svg class="ms-auto" width="11" height="11"><use href="#key"/></svg></div><div class="val opts d-flex gap-1"><button class="ico-opt" aria-label="顶对齐"><svg width="24" height="24"><use href="#v-t"/></svg></button><button class="ico-opt" aria-label="垂直居中"><svg width="24" height="24"><use href="#v-c"/></svg></button><button class="ico-opt" aria-label="底对齐"><svg width="24" height="24"><use href="#v-b"/></svg></button><button class="ico-opt active" aria-label="垂直填充"><svg width="24" height="24"><use href="#v-f"/></svg></button></div></div>

   <div class="sect later d-flex"><h2 class="name-col d-flex align-items-center sh"><svg width="7" height="7"><use href="#opened"/></svg>内容</h2></div>
   <div class="prop d-flex h35"><label for="txt" class="name-col"><span class="h25 d-flex align-items-center">文本</span></label><div class="val d-flex align-items-center h25"><input id="txt" class="field mid" value="文本块"><svg class="more" width="8" height="5"><use href="#down"/></svg><svg width="8" height="8"><path d="M3 1h4v6H2M3 0 1 1.500 3 3" fill="none" stroke="#e8e337"/></svg><button class="grad-btn func"><svg width="16" height="17"><path d="M12 2q-3-2-4 3L6.500 13q-1 3-4 2M4 7h7" fill="none" stroke="#4a5a86" stroke-width="2"/></svg><span>GetText_0</span><svg width="8" height="5"><use href="#down"/></svg></button><svg width="13" height="13"><use href="#mag"/></svg></div></div>

   <div class="sect later d-flex"><h2 class="name-col d-flex align-items-center sh"><svg width="7" height="7"><use href="#opened"/></svg>外观</h2></div>
   <div class="prop d-flex align-items-center h23"><div class="name-col open d-flex align-items-center"><svg width="6" height="7" viewBox="1 0 7 8"><use href="#opened" width="8" height="8"/></svg>颜色和不透明度<svg class="ms-auto" width="11" height="11"><use href="#key"/></svg></div><div class="val d-flex align-items-center"><button class="swatch tint" aria-label="颜色"></button><input type="checkbox" class="tick mid-row" id="inh"><label for="inh">继承</label><button class="grad-btn bind">绑定<svg width="8" height="5"><use href="#down"/></svg></button></div></div>
   <div class="prop d-flex align-items-center h24"><label for="cr" class="name-col d-flex align-items-center"><span class="chan">R</span><svg class="ms-auto" width="11" height="11"><use href="#key"/></svg></label><div class="val"><input id="cr" class="field num d-block" value="1.0"></div></div>
   <div class="prop d-flex align-items-center h24"><label for="cg" class="name-col d-flex align-items-center"><span class="chan">G</span><svg class="ms-auto" width="11" height="11"><use href="#key"/></svg></label><div class="val"><input id="cg" class="field num d-block" value="1.0"></div></div>
   <div class="prop d-flex align-items-center h24"><label for="cb" class="name-col d-flex align-items-center"><span class="chan">B</span><svg class="ms-auto" width="11" height="11"><use href="#key"/></svg></label><div class="val"><input id="cb" class="field num d-block" value="1.0"></div></div>
   <div class="prop d-flex align-items-center h24"><label for="ca" class="name-col d-flex align-items-center"><span class="chan">A</span><svg class="ms-auto" width="11" height="11"><use href="#key"/></svg></label><div class="val"><input id="ca" class="field num d-block" value="1.0"></div></div>
   <div class="prop d-flex align-items-center h23"><div class="name-col open d-flex align-items-center"><svg width="6" height="10"><use href="#closed"/></svg>字体</div></div>
   <div class="prop d-flex align-items-center h25"><div class="name-col open d-flex align-items-center"><svg width="6" height="10"><use href="#closed"/></svg>删除线</div><div class="val"><button class="swatch brush d-block" aria-label="删除线画刷"></button></div></div>
   <div class="prop d-flex align-items-center h25"><div class="name-col open d-flex align-items-center"><svg width="6" height="10"><use href="#closed"/></svg>阴影偏移<svg class="ms-auto" width="11" height="11"><use href="#key"/></svg></div><div class="val d-flex"><div class="axis d-flex align-items-center ps-1 me-1"><label for="ox">X</label><input id="ox" class="field num" value="1.0"></div><div class="axis d-flex align-items-center ps-1"><label for="oy">Y</label><input id="oy" class="field num" value="1.0"></div></div></div>
   <div class="prop d-flex align-items-center h24"><div class="name-col open d-flex align-items-center"><svg width="6" height="10"><use href="#closed"/></svg>阴影颜色<svg class="ms-auto" width="11" height="11"><use href="#key"/></svg></div><div class="val d-flex align-items-center"><button class="swatch shade d-flex bg-black" aria-label="阴影颜色"><span class="checker"></span></button><button class="grad-btn bind">绑定<svg width="8" height="5"><use href="#down"/></svg></button></div></div>
   <div class="prop d-flex align-items-center h25"><label for="minw" class="name-col d-flex align-items-center">所需最小宽度<svg class="ms-auto" width="11" height="11"><use href="#key"/></svg></label><div class="val"><input id="minw" class="field num d-block" value="0.0"></div></div>
   <div class="prop d-flex align-items-center h25"><label for="tr" class="name-col d-flex align-items-center">变换规则<svg class="ms-auto" width="11" height="11"><use href="#key"/></svg></label><div class="val"><select id="tr" class="combo combo-grad d-block"><option>无</option></select></div></div>
   <div class="prop d-flex align-items-center h34"><div class="name-col d-flex align-items-center">对齐<svg class="ms-auto" width="11" height="11"><use href="#key"/></svg></div><div class="val opts d-flex gap-1"><button class="ico-opt active" aria-label="文本左对齐"><svg width="24" height="24"><use href="#h-l"/></svg></button><button class="ico-opt" aria-label="文本居中"><svg width="24" height="24"><use href="#h-c"/></svg></button><button class="ico-opt" aria-label="文本右对齐"><svg width="24" height="24"><use href="#h-r"/></svg></button></div></div>
   <div class="shadow-line"></div>
   <div class="prop d-flex align-items-center h25"><label for="mg" class="name-col open d-flex align-items-center"><svg width="6" height="10"><use href="#closed"/></svg>边缘</label><div class="val"><input id="mg" class="field wide d-block" value="0.0"></div></div>
   <div class="prop d-flex align-items-center h23"><label for="lh" class="name-col d-flex align-items-center">行高百分比</label><div class="val"><input id="lh" class="field num d-block" value="1.0"></div></div>
   </div>
   <button class="fold d-flex w-100 border-0 align-items-center justify-content-center" aria-label="收起高级选项"><svg width="10" height="8"><path d="m5 0 5 5H0zM0 6h10v1H0z" fill="#929292"/></svg></button>
   <div class="sect d-flex"><h2 class="name-col d-flex align-items-center sh"><svg width="7" height="7"><use href="#opened"/></svg>可访问性</h2></div>
   <div class="prop d-flex align-items-center h24"><label for="acc" class="name-col d-flex align-items-center">重载可访问默认值</label><div class="val ps-1"><input id="acc" type="checkbox" class="tick"></div></div>
   <div class="prop d-flex align-items-center h24"><label for="sub" class="name-col dim d-flex align-items-center">可访问子项</label><div class="val ps-1"><input id="sub" type="checkbox" class="tick" disabled></div></div>
   <div class="props-scroll position-absolute"></div>
  </div>
 </section>
</main>

<footer class="bottom-strip d-flex flex-shrink-0 position-relative overflow-hidden">
 <section class="anim d-flex flex-column">
  <div class="dock-tab d-flex align-items-center flex-shrink-0"><svg width="17" height="14" viewBox="0 0 17 14"><path d="m2 8 4 5 4-5" fill="none" stroke="#777" stroke-width="2"/><path d="m7 8 5-7 4 2-5 7z" fill="#e1edfa"/><path d="m7 8 2-3 4 3-2 2z" fill="#739fd0"/></svg><span class="sh">动画</span><button class="x ms-auto" aria-label="关闭"><svg width="8" height="8"><use href="#cross"/></svg></button></div>
  <div class="dock-body flex-fill d-flex align-items-end ps-1"><div class="add-bar"></div><div class="find-edge"></div></div>
 </section>
 <section class="d-flex flex-column flex-fill">
  <div class="d-flex flex-shrink-0"><div class="dock-tab d-flex align-items-center"><svg width="17" height="14" viewBox="0 0 17 14"><path d="m1 3 14-2v4L1 6z" fill="#e8effc"/><path d="M1 7h14v6H2z" fill="#a9bfe8"/><path d="m4 3 2 3M9 2l2 3M1 10h14" stroke="#526ba5"/></svg><span class="sh">时间轴</span><button class="x ms-auto" aria-label="关闭"><svg width="8" height="8"><use href="#cross"/></svg></button></div><div class="dock-tab idle d-flex align-items-center"><svg width="16" height="16" viewBox="0 0 16 16"><path d="M2 0h10l3 3v13H1z" fill="#c4d6f5"/><path d="m4 4 5 4-5 4M9 12h5" stroke="#1c2a44" stroke-width="2" fill="none"/></svg><span class="sh">编译器结果</span><button class="x ms-auto" aria-label="关闭"><svg width="8" height="8"><use href="#cross"/></svg></button></div></div>
  <div class="dock-body flex-fill"><svg width="400" height="9"><path d="M151.500 4v5M243.500 4v5M312.500 4v5M375.500 4v5" stroke="#303030" stroke-width="2"/><path d="m171 5 4 4h-8zM221 5l4 4h-8zM20 7l3 2h-6z" fill="#999"/><rect x="249" y="2" width="32" height="9" rx="2" fill="#8f7d75"/><circle cx="265" cy="11" r="6" fill="#9c9c9c"/><path d="M388.500 4v5" stroke="#888"/></svg></div>
 </section>
 <div class="mark-text position-absolute">CSDN @vanilla956</div>
</footer>
</body>
</html>
